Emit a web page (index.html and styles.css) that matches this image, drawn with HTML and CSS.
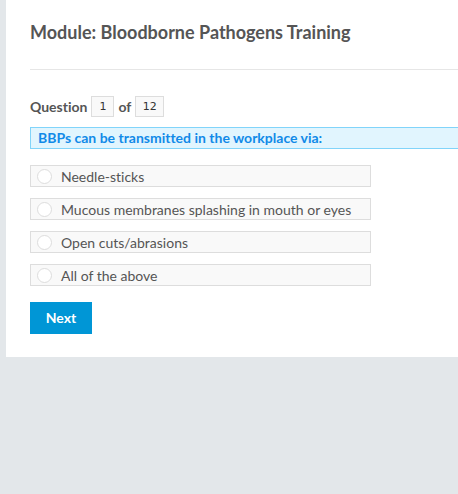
FILE: index.html
```html
<!DOCTYPE html>
<html>
<head>
<meta charset="utf-8">
<title>Module: Bloodborne Pathogens Training</title>
<link rel="stylesheet" href="styles.css">
</head>
<body>

<div class="panel">
	<h1 class="panel-title">Module: Bloodborne Pathogens Training</h1>
	<div class="panel-rule"></div>

	<div class="quiz-count">
		Question <span class="quiz-num">1</span> of <span class="quiz-num quiz-num-wide">12</span>
	</div>

	<div class="quiz-question">BBPs can be transmitted in the workplace via:</div>

	<ul class="quiz-options">
		<li class="quiz-option"><span class="quiz-radio"></span>Needle-sticks</li>
		<li class="quiz-option"><span class="quiz-radio"></span>Mucous membranes splashing in mouth or eyes</li>
		<li class="quiz-option"><span class="quiz-radio"></span>Open cuts/abrasions</li>
		<li class="quiz-option"><span class="quiz-radio"></span>All of the above</li>
	</ul>

	<a class="quiz-next" href="#">Next</a>
</div>

</body>
</html>
```

FILE: styles.css
```css
html,body{margin:0;padding:0;}

body{
	background:#e3e7ea;
	font-family:Lato,"Liberation Sans",sans-serif;color:#555;
	font-variant-ligatures:no-common-ligatures;
	overflow:hidden;
}

.panel{
	margin-left:6px;
	background:#fff;
	padding:20px 0 23px 24px;
}

.panel-title{
	margin:0;
	font-size:18px;line-height:24px;font-weight:700;color:#555;
}

.panel-rule{
	height:1px;background:#e6e6e6;
	margin-top:25px;
}

.quiz-count{
	margin-top:26px;
	display:flex;align-items:center;gap:4px;
	font-size:14px;font-weight:700;color:#555;
	height:21px;
}
.quiz-num{
	display:inline-flex;align-items:center;justify-content:center;
	width:21px;height:19px;
	border:1px solid #ddd;background:#f9f9f9;
	font-family:"DejaVu Sans",sans-serif;font-size:11px;font-weight:400;color:#333;
}
.quiz-num-wide{width:27px;}

.quiz-question{
	margin-top:10px;
	height:20px;line-height:20px;
	padding-left:7px;
	border:1px solid #81d4fa;border-right:none;
	background:#e1f5fe;
	color:#118ae8;font-size:14px;font-weight:700;
}

.quiz-options{
	list-style:none;margin:16px 0 0 0;padding:0;
	display:flex;flex-direction:column;gap:11px;
}
.quiz-option{
	width:339px;height:20px;
	border:1px solid #ddd;background:#f9f9f9;
	display:flex;align-items:center;
	font-size:14px;color:#555;
}
.quiz-radio{
	width:15px;height:15px;border-radius:50%;
	border:1px solid #ddd;background:#fff;
	margin:0 9px 0 6px;
	box-sizing:border-box;
}

.quiz-next{
	display:inline-block;
	margin-top:16px;
	width:62px;height:32px;line-height:32px;
	background:#0096d6;color:#fff;text-align:center;
	font-size:14px;font-weight:700;text-decoration:none;
}
```
